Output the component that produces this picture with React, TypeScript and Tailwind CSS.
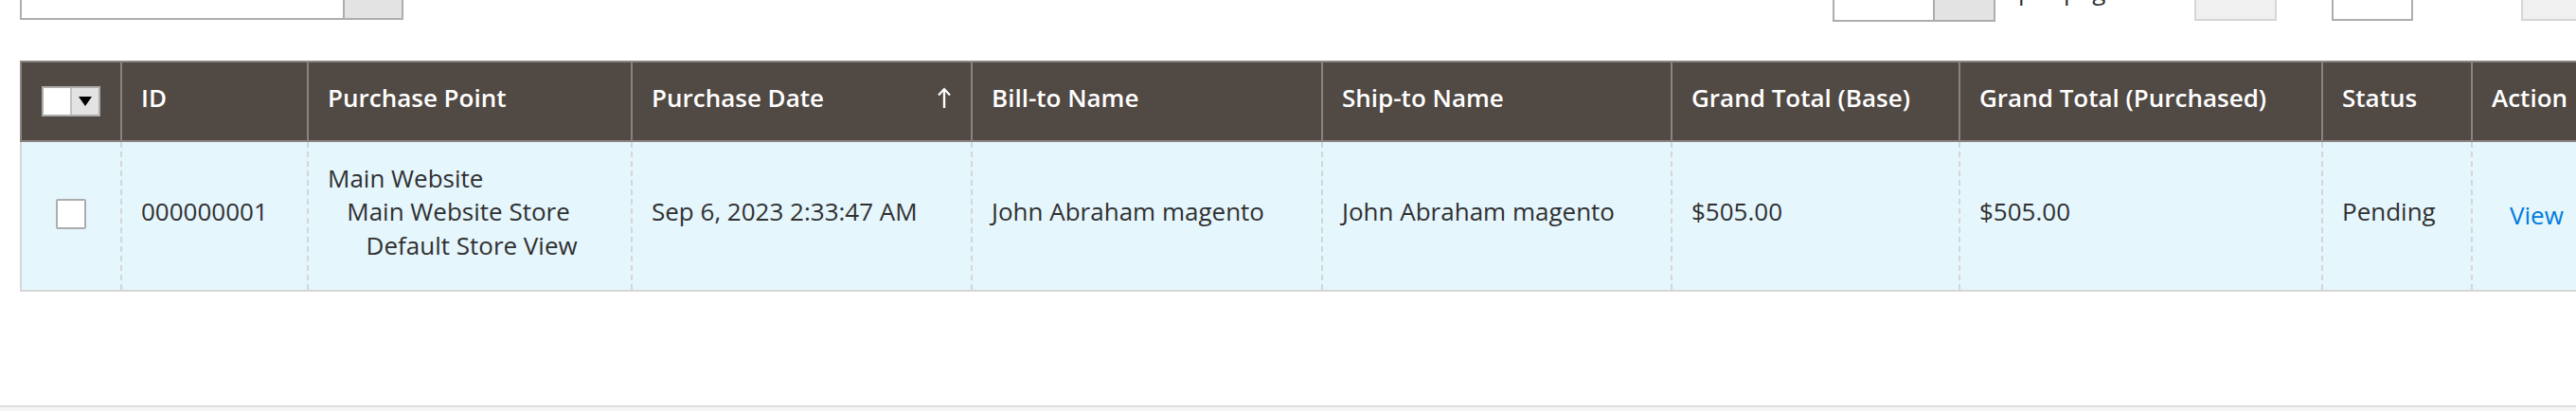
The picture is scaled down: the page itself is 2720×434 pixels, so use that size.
import React from "react";

const COLS =
  "grid grid-cols-[106px_197px_342px_359px_370px_369px_304px_383px_158px_240px]";

function SortArrow() {
  return (
    <svg width="16" height="24" viewBox="0 0 16 24" className="shrink-0 mt-[5px]">
      <line x1="8" y1="3" x2="8" y2="23" stroke="#fff" strokeWidth="2.4" />
      <polyline points="2,9.5 8,3 14,9.5" fill="none" stroke="#fff" strokeWidth="2.2" />
    </svg>
  );
}

function HeaderCell({ children, sort }: { children: React.ReactNode; sort?: boolean }) {
  return (
    <div className="h-[82px] border-r-2 border-[#8a837f] px-[20px] pt-[20px] flex items-start justify-between">
      <span className="text-white font-semibold text-[26px] leading-[1.36] whitespace-nowrap">
        {children}
      </span>
      {sort ? <SortArrow /> : null}
    </div>
  );
}

function BodyCell({ children }: { children: React.ReactNode }) {
  return (
    <div className="border-r-2 border-dashed border-[#d6d6d6] px-[20px] pt-[21px] pb-[29px] flex flex-col justify-center text-[26px] leading-[1.36] text-[#303030] whitespace-nowrap">
      {children}
    </div>
  );
}

export default function App() {
  return (
    <div className="w-[2720px] h-[434px] overflow-hidden bg-white flex flex-col font-['Open_Sans',sans-serif]">
      {/* toolbar (mostly scrolled above view) */}
      <div className="h-[23px] flex items-end shrink-0">
        <div className="ml-[21px] mb-[2px] flex h-[66px]">
          <div className="w-[343px] border-2 border-[#adadad] bg-white" />
          <div className="w-[62px] border-2 border-l-0 border-[#adadad] bg-[#e3e3e3]" />
        </div>
        <div className="ml-[1509px] flex items-end">
          <div className="w-[172px] h-[66px] flex border-2 border-[#adadad] bg-white">
            <div className="flex-1" />
            <div className="w-[64px] bg-[#e3e3e3] border-l-2 border-[#adadad]" />
          </div>
          <div className="w-[210px] pl-[24px] mb-[15px] text-[26px] leading-[1.36] text-[#303030] whitespace-nowrap">
            per page
          </div>
          <div className="w-[87px] h-[66px] mb-[1px] border-2 border-[#d6d6d6] bg-[#f0f0f0]" />
          <div className="ml-[58px] w-[86px] h-[66px] mb-[1px] border-2 border-[#adadad] bg-white" />
          <div className="w-[114px] pl-[29px] mb-[22px] text-[26px] leading-[1.36] text-[#303030] whitespace-nowrap">
            of 1
          </div>
          <div className="w-[88px] h-[66px] mb-[1px] border-2 border-[#d6d6d6] bg-[#f0f0f0] shrink-0" />
        </div>
      </div>

      {/* header */}
      <div className={`${COLS} mt-[41px] ml-[21px] w-max border-l-2 border-y-2 border-[#8a837f] bg-[#514943] shrink-0`}>
        <div className="h-[82px] border-r-2 border-[#8a837f] flex items-center justify-center">
          <div className="w-[62px] h-[32px] flex border-2 border-[#adadad]">
            <div className="w-[28px] bg-white" />
            <div className="flex-1 bg-[#e3e3e3] border-l-2 border-[#c2c2c2] flex items-center justify-center">
              <svg width="14" height="10" viewBox="0 0 14 10">
                <polygon points="0,0 14,0 7,10" fill="#000" />
              </svg>
            </div>
          </div>
        </div>
        <HeaderCell>ID</HeaderCell>
        <HeaderCell>Purchase Point</HeaderCell>
        <HeaderCell sort>Purchase Date</HeaderCell>
        <HeaderCell>Bill-to Name</HeaderCell>
        <HeaderCell>Ship-to Name</HeaderCell>
        <HeaderCell>Grand Total (Base)</HeaderCell>
        <HeaderCell>Grand Total (Purchased)</HeaderCell>
        <HeaderCell>Status</HeaderCell>
        <HeaderCell>Action</HeaderCell>
      </div>

      {/* body row */}
      <div className={`${COLS} ml-[21px] w-max border-l-2 border-b-2 border-[#d6d6d6] bg-[#e5f6fd] shrink-0`}>
        <div className="border-r-2 border-dashed border-[#d6d6d6] pt-[24px] pb-[29px] flex items-center justify-center">
          <div className="w-[32px] h-[32px] border-2 border-[#adadad] bg-white rounded-[2px]" />
        </div>
        <BodyCell>000000001</BodyCell>
        <BodyCell>
          <span>Main Website</span>
          <span>{"\u00a0\u00a0\u00a0Main Website Store"}</span>
          <span>{"\u00a0\u00a0\u00a0\u00a0\u00a0\u00a0Default Store View"}</span>
        </BodyCell>
        <BodyCell>Sep 6, 2023 2:33:47 AM</BodyCell>
        <BodyCell>John Abraham magento</BodyCell>
        <BodyCell>John Abraham magento</BodyCell>
        <BodyCell>$505.00</BodyCell>
        <BodyCell>$505.00</BodyCell>
        <BodyCell>Pending</BodyCell>
        <BodyCell>
          <span className="pl-[19px] pt-[7px] text-[#007bdb]">View</span>
        </BodyCell>
      </div>

      <div className="flex-1" />
      <div className="h-[6px] border-t-2 border-[#e0e0e0] bg-[#f5f5f5] shrink-0" />
    </div>
  );
}
